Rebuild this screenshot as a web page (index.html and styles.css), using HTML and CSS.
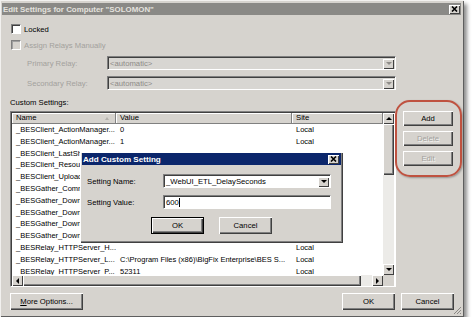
FILE: index.html
```html
<!DOCTYPE html>
<html lang="en">
<head>
	<meta charset="UTF-8">
	<title>Edit Settings</title>
	<link rel="stylesheet" href="styles.css">
</head>
<body>
	<div class="window">
		<div class="titlebar">
			<span class="title">Edit Settings for Computer "SOLOMON"</span>
			<span class="xbtn"><svg width="7" height="6" viewBox="0 0 7 6"><path d="M1 0.5 L6 5.5 M6 0.5 L1 5.5" stroke="#000" stroke-width="1.6"/></svg></span>
		</div>

		<div class="content">
			<div class="check"><span class="box"></span>Locked</div>
			<div class="check off"><span class="box"></span>Assign Relays Manually</div>

			<div class="relay">
				<span class="rlabel">Primary Relay:</span>
				<div class="combo dim"><span class="val">&lt;automatic&gt;</span><span class="drop"><i class="tri down"></i></span></div>
			</div>
			<div class="relay">
				<span class="rlabel">Secondary Relay:</span>
				<div class="combo dim"><span class="val">&lt;automatic&gt;</span><span class="drop"><i class="tri down"></i></span></div>
			</div>

			<div class="caption">Custom Settings:</div>

			<div class="middle">
				<div class="list">
					<div class="view">
						<div class="head">
							<span class="c1">Name<i class="sort"></i></span>
							<span class="c2">Value</span>
							<span class="c3">Site</span>
						</div>
						<div class="row"><span class="c1">_BESClient_ActionManager...</span><span class="c2">0</span><span class="c3">Local</span></div>
						<div class="row"><span class="c1">_BESClient_ActionManager...</span><span class="c2">1</span><span class="c3">Local</span></div>
						<!-- rows below are mostly hidden by the dialog -->
						<div class="row"><span class="c1">_BESClient_LastSh</span></div>
						<div class="row"><span class="c1">_BESClient_Resour</span></div>
						<div class="row"><span class="c1">_BESClient_Upload</span></div>
						<div class="row"><span class="c1">_BESGather_Comm</span></div>
						<div class="row"><span class="c1">_BESGather_Down</span></div>
						<div class="row"><span class="c1">_BESGather_Down</span></div>
						<div class="row"><span class="c1">_BESGather_Down</span></div>
						<div class="row"><span class="c1">_BESGather_Down</span></div>
						<div class="row"><span class="c1">_BESRelay_HTTPServer_H...</span><span class="c2"></span><span class="c3">Local</span></div>
						<div class="row"><span class="c1">_BESRelay_HTTPServer_L...</span><span class="c2">C:\Program Files (x86)\BigFix Enterprise\BES S...</span><span class="c3">Local</span></div>
						<div class="row"><span class="c1">_BESRelay_HTTPServer_P...</span><span class="c2">52311</span><span class="c3">Local</span></div>
					</div>
					<div class="vscroll">
						<span class="sbtn"><i class="tri up"></i></span>
						<span class="vthumb"></span>
						<span class="track"></span>
						<span class="sbtn"><i class="tri down"></i></span>
					</div>
					<div class="hscroll">
						<span class="sbtn"><i class="tri left"></i></span>
						<span class="hthumb"></span>
						<span class="track"></span>
						<span class="sbtn"><i class="tri right"></i></span>
					</div>
					<div class="corner"></div>
				</div>

				<div class="side">
					<button class="btn">Add</button>
					<button class="btn off">Delete</button>
					<button class="btn off">Edit</button>
				</div>
			</div>

			<div class="footer">
				<button class="btn more"><u>M</u>ore Options...</button>
				<div class="pair">
					<button class="btn ok">OK</button>
					<button class="btn ok">Cancel</button>
				</div>
			</div>
		</div>

		<svg class="grip" width="9" height="9" viewBox="0 0 9 9">
			<path d="M8 1 L1 8 M8 4 L4 8 M8 7 L7 8" stroke="#8a8884" stroke-width="1"/>
		</svg>

		<!-- modal dialog on top of the list -->
		<div class="dialog">
			<div class="dtitle">
				<span>Add Custom Setting</span>
				<span class="xbtn"><svg width="7" height="6" viewBox="0 0 7 6"><path d="M1 0.5 L6 5.5 M6 0.5 L1 5.5" stroke="#000" stroke-width="1.6"/></svg></span>
			</div>
			<div class="form">
				<span>Setting Name:</span>
				<div class="combo"><span class="val">_WebUI_ETL_DelaySeconds</span><span class="drop"><i class="tri down"></i></span></div>
				<span>Setting Value:</span>
				<div class="field"><span class="val">600</span><i class="caret"></i></div>
			</div>
			<div class="dbuttons">
				<button class="btn default">OK</button>
				<button class="btn">Cancel</button>
			</div>
		</div>

		<!-- annotation ring -->
		<div class="ring"></div>
	</div>
</body>
</html>
```

FILE: styles.css
```css
body {
	margin: 0px;
	background-color: #ffffff;
	color: #000000;
	font-family: "Liberation Sans", Arial, sans-serif;
	font-size: 7.7px;
}
.window {
	position: relative;
	width: 464px;
	height: 317px;
	background: #d6d3ce;
	box-shadow: inset 1px 1px #f2f1ef, inset -1px -1px #5e5e5e, 3px 4px 4px rgba(0,0,0,0.45);
	display: flex;
	flex-direction: column;
}
.titlebar {
	height: 12px;
	margin: 3px 3px 0px 2px;
	padding: 0px 1px 0px 1px;
	display: flex;
	align-items: center;
	justify-content: space-between;
	background: #8a8986;
	color: #e4e2de;
	font-weight: bold;
	font-size: 7.9px;
}
.xbtn {
	width: 11px;
	height: 9px;
	display: flex;
	align-items: center;
	justify-content: center;
	background: #d6d3ce;
	box-shadow: inset 1px 1px #ffffff, inset -1px -1px #404040;
}

.content {
	padding: 0px 10px;
	display: flex;
	flex-direction: column;
}
.check {
	display: flex;
	align-items: center;
	gap: 3px;
	height: 10px;
	margin-left: 1px;
	margin-top: 9px;
}
.check + .check {
	margin-top: 6px;
}
.box {
	width: 8px;
	height: 8px;
	background: #ffffff;
	border: 1px solid;
	border-color: #808080 #ffffff #ffffff #808080;
	box-shadow: inset 1px 1px #404040;
}
.check.off {
	color: #a3a19d;
}
.check.off .box {
	background: #d6d3ce;
	box-shadow: inset 1px 1px #a0a0a0;
}
.relay {
	display: flex;
	align-items: center;
	margin-top: 6px;
	margin-left: 17px;
	color: #a3a19d;
}
.relay:first-of-type {
	margin-top: 8px;
}
.rlabel {
	width: 80px;
}
.relay .combo {
	width: 289px;
}

.combo, .field {
	height: 14px;
	box-sizing: border-box;
	display: flex;
	align-items: center;
	background: #ffffff;
	border: 1px solid;
	border-color: #808080 #ffffff #ffffff #808080;
	box-shadow: inset 1px 1px #404040;
	padding: 1px 1px 0px 2px;
}
.combo.dim {
	background: #d8d6d2;
	color: #8e8c88;
}
.val {
	flex: 1;
}
.drop {
	width: 11px;
	height: 10px;
	display: flex;
	align-items: center;
	justify-content: center;
	background: #d6d3ce;
	box-shadow: inset 1px 1px #ffffff, inset -1px -1px #404040;
}
.combo.dim .tri.down {
	border-top-color: #8e8c88;
}

.caption {
	margin-top: 8px;
	height: 10px;
	line-height: 10px;
}

.tri {
	width: 0px;
	height: 0px;
	border: 3px solid transparent;
}
.tri.up { border-bottom-color: #000; border-top-width: 0px; }
.tri.down { border-top-color: #000; border-bottom-width: 0px; }
.tri.left { border-right-color: #000; border-left-width: 0px; }
.tri.right { border-left-color: #000; border-right-width: 0px; }

.middle {
	display: flex;
	gap: 7px;
	margin-top: 3px;
}
.list {
	width: 386px;
	height: 176px;
	box-sizing: border-box;
	border: 1px solid;
	border-color: #808080 #ffffff #ffffff #808080;
	box-shadow: inset 1px 1px #404040;
	padding: 1px 1px 0px 1px;
	background: #ffffff;
	display: grid;
	grid-template-columns: 1fr 11px;
	grid-template-rows: 1fr 11px;
}
.view {
	overflow: hidden;
}
.head, .row {
	display: grid;
	grid-template-columns: 104px 176px 1fr;
	white-space: nowrap;
}
.head {
	height: 11px;
	line-height: 10px;
	background: #d6d3ce;
}
.head span {
	position: relative;
	padding-left: 4px;
	box-shadow: inset -1px -1px #808080, inset 1px 1px #ffffff;
}
.sort {
	position: absolute;
	left: 93px;
	top: 4px;
	width: 0px;
	height: 0px;
	border: 2.5px solid transparent;
	border-top-width: 0px;
	border-bottom: 3px solid #b4b1ac;
}
.row {
	height: 11.8px;
	line-height: 11.8px;
	font-size: 7.5px;
}
.row span {
	padding-left: 4px;
	overflow: hidden;
}

.vscroll, .hscroll {
	display: flex;
	background: #ecebe8;
}
.vscroll {
	flex-direction: column;
}
.sbtn {
	width: 11px;
	height: 11px;
	flex: none;
	display: flex;
	align-items: center;
	justify-content: center;
	background: #d6d3ce;
	box-shadow: inset 1px 1px #ffffff, inset -1px -1px #404040;
}
.vthumb, .hthumb {
	background: #d6d3ce;
	box-shadow: inset 1px 1px #ffffff, inset -1px -1px #404040, inset -2px -2px #808080;
}
.vthumb {
	height: 51px;
}
.hthumb {
	width: 338px;
}
.track {
	flex: 1;
}
.corner {
	background: #d6d3ce;
}

.side {
	display: flex;
	flex-direction: column;
	gap: 5px;
}
.btn {
	height: 16px;
	padding: 0px;
	font: inherit;
	color: #000;
	background: #d6d3ce;
	border: none;
	box-shadow: inset 1px 1px #ffffff, inset -1px -1px #404040, inset -2px -2px #808080;
}
.side .btn {
	width: 50px;
	height: 15px;
}
.btn.off {
	color: #a3a19d;
	text-shadow: 1px 1px #f4f3f1;
}

.footer {
	display: flex;
	justify-content: space-between;
	margin-top: 6px;
}
.footer .btn {
	height: 17px;
}
.more {
	width: 73px;
}
.pair {
	display: flex;
	gap: 6px;
}
.pair .btn {
	width: 53px;
}

.grip {
	position: absolute;
	right: 2px;
	bottom: 2px;
}

.dialog {
	position: absolute;
	left: 80px;
	top: 152px;
	width: 263px;
	height: 91px;
	box-sizing: border-box;
	padding: 1px 2px;
	background: #d6d3ce;
	box-shadow: inset 1px 1px #ffffff, inset -1px -1px #404040, inset -2px -2px #808080;
}
.dtitle {
	height: 12px;
	padding: 0px 2px 0px 1px;
	display: flex;
	align-items: center;
	justify-content: space-between;
	background: #0b266b;
	color: #ffffff;
	font-weight: bold;
	font-size: 8.1px;
}
.form {
	display: grid;
	grid-template-columns: 76px 168px;
	row-gap: 7px;
	align-items: center;
	padding: 9px 0px 0px 5px;
}
.caret {
	width: 1px;
	height: 9px;
	background: #000;
	margin-right: auto;
}
.field .val {
	flex: none;
}
.dbuttons {
	display: flex;
	justify-content: center;
	gap: 15px;
	margin-top: 8px;
}
.dbuttons .btn {
	width: 53px;
	height: 17px;
}
.btn.default {
	box-shadow: inset 0px 0px 0px 1px #000, inset 2px 2px #ffffff, inset -2px -2px #404040, inset -3px -3px #808080;
}

.ring {
	position: absolute;
	left: 395px;
	top: 100px;
	width: 67px;
	height: 77px;
	box-sizing: border-box;
	border: 2.5px solid #bf5240;
	border-radius: 15px;
	box-shadow: 1px 1px 2px rgba(0,0,0,0.3);
}
```
